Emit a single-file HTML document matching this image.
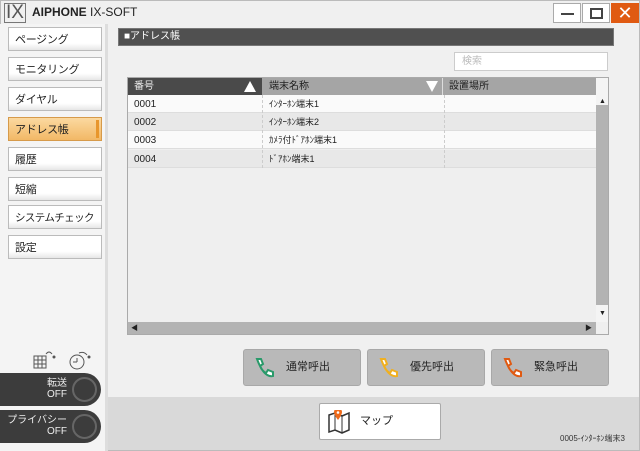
<html><head><style>
*{box-sizing:border-box;margin:0;padding:0}
body{width:640px;height:451px;background:#f0f0f0;font-family:"Liberation Sans","Noto Sans CJK JP",sans-serif;font-size:11px;line-height:13px;color:#222;position:relative;overflow:hidden}
.a{position:absolute}
.nav{position:absolute;left:8px;width:94px;height:24px;background:linear-gradient(#fff 70%,#e6e6e6);border:1px solid #bbb;padding:0 0 0 6px;font-size:11px;line-height:24px;white-space:nowrap;letter-spacing:-0.3px}
.row{position:absolute;left:128px;width:468px;height:18px;border-bottom:1px solid #ddd;font-size:10px}
.row span{position:absolute;top:3px;line-height:13px}
.btn{position:absolute;top:349px;width:118px;height:37px;background:#b9b9b9;border:1px solid #a8a8a8;border-radius:3px;font-size:11px}
.btn span{position:absolute;left:42px;top:11px}
.btn svg{position:absolute;left:8px;top:6px}
.pill{position:absolute;left:0;width:101px;height:33px;background:#3c3c3c;border-radius:0 17px 17px 0;color:#eee;font-size:10px;text-align:right;line-height:11px}
.pill .c{position:absolute;right:4px;top:4px;width:25px;height:25px;border:2px solid #666;border-radius:50%}
</style></head><body>
<div class="a" style="left:0;top:0;width:640px;height:451px;border:1px solid #bbb"></div>
<div class="a" style="left:4px;top:3px;width:22px;height:20px;border:1px solid #777;font-size:19px;line-height:18px;color:#555;text-align:center">IX</div>
<div class="a" style="left:32px;top:6px;font-size:12px;font-weight:bold">AIPHONE <span style="font-weight:normal">IX-SOFT</span></div>
<div class="a" style="left:553px;top:3px;width:28px;height:20px;border:1px solid #aaa;background:#fff"><div class="a" style="left:7px;top:9px;width:13px;height:2px;background:#444"></div></div>
<div class="a" style="left:582px;top:3px;width:28px;height:20px;border:1px solid #aaa;background:#fff"><div class="a" style="left:7px;top:4px;width:13px;height:11px;border:2px solid #444"></div></div>
<div class="a" style="left:611px;top:3px;width:28px;height:20px;background:#e05a12;color:#fff;font-size:18px;text-align:center;line-height:20px">✕</div>
<div class="a" style="left:0;top:24px;width:108px;height:427px;background:#f4f4f4;border-right:3px solid #ddd"></div>
<div class="nav" style="top:27px">ページング</div>
<div class="nav" style="top:57px">モニタリング</div>
<div class="nav" style="top:87px">ダイヤル</div>
<div class="nav" style="top:117px;background:linear-gradient(#fbd9a0,#f2b866);border-color:#d69a4a">アドレス帳<div class="a" style="right:2px;top:2px;width:3px;height:18px;background:#e8962c"></div></div>
<div class="nav" style="top:147px">履歴</div>
<div class="nav" style="top:177px">短縮</div>
<div class="nav" style="top:205px;font-size:10.5px;letter-spacing:-0.6px">システムチェック</div>
<div class="nav" style="top:235px">設定</div>
<svg class="a" style="left:32px;top:350px" width="62" height="22"><g stroke="#555" fill="none" stroke-width="1"><rect x="2" y="6" width="12" height="12"/><path d="M2 10h12M2 14h12M6 6v12M10 6v12M14 4q3-4 6 0"/><circle cx="45" cy="12" r="7"/><path d="M45 12v-4M45 12h-4M47 3q5-2 8 2"/></g><circle cx="22" cy="7" r="1.5" fill="#555"/><circle cx="57" cy="7" r="1.5" fill="#555"/></svg>
<div class="pill" style="top:373px"><div style="position:absolute;right:34px;top:5px">転送<br>OFF</div><div class="c"></div></div>
<div class="pill" style="top:410px"><div style="position:absolute;right:34px;top:5px">プライバシー<br>OFF</div><div class="c"></div></div>
<div class="a" style="left:118px;top:28px;width:496px;height:18px;background:#505050;border:1px solid #777;color:#fff;font-size:10px;line-height:16px;padding:0 5px">■アドレス帳</div>
<div class="a" style="left:454px;top:52px;width:154px;height:19px;background:#fff;border:1px solid #ccc;color:#bbb;font-size:10px;line-height:17px;padding:0 7px">検索</div>
<div class="a" style="left:127px;top:77px;width:482px;height:258px;background:#efefef;border:1px solid #aaa"></div>
<div class="a" style="left:128px;top:78px;width:134px;height:17px;background:#4a4a4a;color:#eee;font-size:10px;line-height:17px;padding:0 6px">番号<div class="a" style="right:6px;top:3px;width:0;height:0;border-left:6px solid transparent;border-right:6px solid transparent;border-bottom:11px solid #fff"></div></div>
<div class="a" style="left:262px;top:78px;width:334px;height:17px;background:#a5a5a5;color:#222;font-size:10px;line-height:17px"><span class="a" style="left:7px;top:0">端末名称</span><div class="a" style="left:164px;top:3px;width:0;height:0;border-left:6px solid transparent;border-right:6px solid transparent;border-top:11px solid #fff"></div><div class="a" style="left:180px;top:0;width:1px;height:17px;background:#ddd"></div><span class="a" style="left:187px;top:0">設置場所</span></div>
<div class="row" style="top:95px;background:#fafafa"><span style="left:6px">0001</span><span style="left:141px;font-size:9px">ｲﾝﾀｰﾎﾝ端末1</span></div>
<div class="row" style="top:113px;background:#e8e8e8"><span style="left:6px">0002</span><span style="left:141px;font-size:9px">ｲﾝﾀｰﾎﾝ端末2</span></div>
<div class="row" style="top:131px;background:#fafafa"><span style="left:6px">0003</span><span style="left:141px;font-size:9px">ｶﾒﾗ付ﾄﾞｱﾎﾝ端末1</span></div>
<div class="row" style="top:150px;background:#e8e8e8"><span style="left:6px">0004</span><span style="left:141px;font-size:9px">ﾄﾞｱﾎﾝ端末1</span></div>
<div class="a" style="left:262px;top:95px;width:0;height:73px;border-left:1px dashed #ccc"></div>
<div class="a" style="left:444px;top:95px;width:0;height:73px;border-left:1px dashed #ccc"></div>
<div class="a" style="left:596px;top:78px;width:12px;height:244px;background:#f4f4f4"><div class="a" style="left:0;top:27px;width:12px;height:200px;background:#b3b3b3"></div><div class="a" style="left:3px;top:17px;font-size:7px">▲</div><div class="a" style="left:3px;top:229px;font-size:7px">▼</div></div>
<div class="a" style="left:128px;top:322px;width:468px;height:12px;background:#b3b3b3"><div class="a" style="left:3px;top:0;font-size:7px">◀</div><div class="a" style="right:4px;top:0;font-size:7px">▶</div></div>
<div class="btn" style="left:243px"><svg width="24" height="24" viewBox="0 0 24 24"><path d="M5 3l4 0 2 5-3 2q2 5 6 7l2-3 5 2v4q-9 2-16-17z" fill="#fff" stroke="#2a9a6a" stroke-width="2"/></svg><span>通常呼出</span></div>
<div class="btn" style="left:367px"><svg width="24" height="24" viewBox="0 0 24 24"><path d="M5 3l4 0 2 5-3 2q2 5 6 7l2-3 5 2v4q-9 2-16-17z" fill="#fff" stroke="#f0b020" stroke-width="2"/></svg><span>優先呼出</span></div>
<div class="btn" style="left:491px"><svg width="24" height="24" viewBox="0 0 24 24"><path d="M5 3l4 0 2 5-3 2q2 5 6 7l2-3 5 2v4q-9 2-16-17z" fill="#fff" stroke="#e05a12" stroke-width="2"/></svg><span>緊急呼出</span></div>
<div class="a" style="left:108px;top:397px;width:531px;height:53px;background:#d9d9d9"></div>
<div class="a" style="left:319px;top:403px;width:122px;height:37px;background:#fff;border:1px solid #aaa;border-radius:2px"><svg class="a" style="left:6px;top:6px" width="26" height="26"><path d="M3 5l6-2 7 3 7-3v17l-7 3-7-3-6 2z" fill="none" stroke="#333" stroke-width="1.5"/><path d="M9 3v17M16 6v17" stroke="#333"/><path d="M8 2a4 4 0 0 1 8 0c0 3-4 8-4 8s-4-5-4-8z" fill="#ee6a1a"/><circle cx="12" cy="2.5" r="1.3" fill="#fff"/></svg><span class="a" style="left:40px;top:11px;font-size:11px">マップ</span></div>
<div class="a" style="left:560px;top:432px;font-size:8px;color:#333">0005-ｲﾝﾀｰﾎﾝ端末3</div>
</body></html>
